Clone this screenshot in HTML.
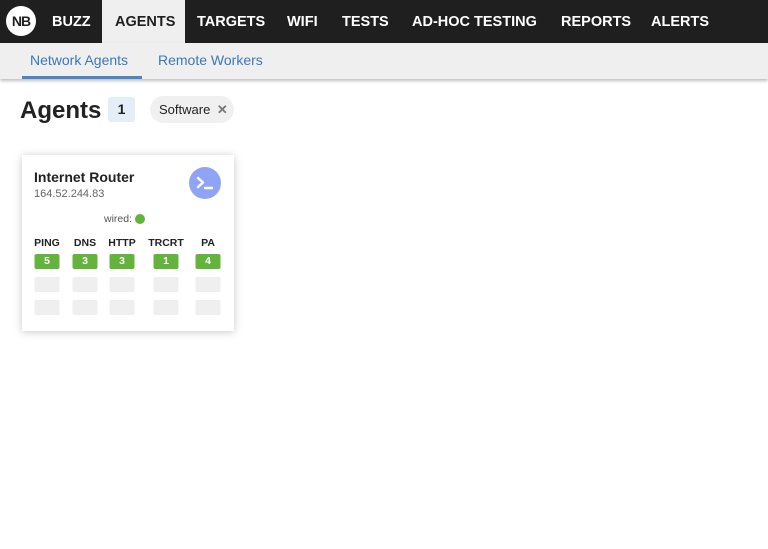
<!DOCTYPE html><html><head><style>
*{margin:0;padding:0;box-sizing:border-box}
body{width:768px;height:549px;background:#fff;font-family:"Liberation Sans",sans-serif;position:relative;overflow:hidden}
.nav{position:absolute;top:0;left:0;width:768px;height:43px;background:#1f1f1f}
.nav span{position:absolute;top:1px;height:43px;line-height:43px;color:#fff;font-weight:bold;font-size:14.5px}
.logo{position:absolute;left:6px;top:6px;width:30px;height:30px;border-radius:50%;background:#fff;color:#1f1f1f;font-weight:bold;font-size:14px;text-align:center;line-height:30px;letter-spacing:-1px}
.sub{position:absolute;top:43px;left:0;width:768px;height:36px;background:#efefef;box-shadow:0 2px 3px rgba(0,0,0,.25)}
.sub span{position:absolute;top:9px;font-size:14px;color:#3b78b7}
.card{position:absolute;left:22px;top:155px;width:212px;height:176px;background:#fff;box-shadow:0 1px 8px rgba(0,0,0,.22)}
.c{position:absolute;transform:translateX(-50%);text-align:center}
.lab{top:82px;font-size:10.5px;font-weight:bold;color:#222}
.b{top:99px;width:25px;height:15px;background:#64b33c;color:#fff;font-weight:bold;font-size:10.5px;line-height:15px;border-radius:2px}
.g{width:25px;height:15px;background:#efefef;border-radius:2px}
</style></head><body>
<div class="nav">
<div class="logo">NB</div>
<div style="position:absolute;left:102px;top:0;width:83px;height:43px;background:#efefef"></div>
<span style="left:52px">BUZZ</span>
<span style="left:115px;color:#1f1f1f">AGENTS</span>
<span style="left:197px">TARGETS</span>
<span style="left:287px">WIFI</span>
<span style="left:342px">TESTS</span>
<span style="left:412px">AD-HOC TESTING</span>
<span style="left:561px">REPORTS</span>
<span style="left:651px">ALERTS</span>
</div>
<div class="sub">
<span style="left:30px">Network Agents</span>
<span style="left:158px">Remote Workers</span>
<div style="position:absolute;left:22px;top:33px;width:120px;height:3px;background:#4a86c8"></div>
</div>
<div style="position:absolute;left:20px;top:97px;font-size:24px;font-weight:bold;color:#222">Agents</div>
<div style="position:absolute;left:108px;top:97px;width:27px;height:25px;background:#e3eef8;border-radius:3px;text-align:center;line-height:25px;font-weight:bold;font-size:14px;color:#222">1</div>
<div style="position:absolute;left:150px;top:96px;width:84px;height:27px;background:#f0f0f0;border-radius:14px;font-size:13px;line-height:27px;padding-left:9px;color:#222">Software <span style="color:#777;font-weight:bold;margin-left:3px">✕</span></div>
<div class="card">
<div style="position:absolute;left:12px;top:14px;font-size:14px;font-weight:bold;color:#222">Internet Router</div>
<div style="position:absolute;left:12px;top:33px;font-size:11px;color:#666">164.52.244.83</div>
<div style="position:absolute;left:167px;top:12px;width:32px;height:32px;border-radius:50%;background:#8fa4f5">
<svg width="32" height="32" viewBox="0 0 32 32"><path d="M9 11l5 4.5-5 4.5" stroke="#fff" stroke-width="2.4" fill="none" stroke-linecap="round" stroke-linejoin="round"/><path d="M16 21h7" stroke="#fff" stroke-width="2.4" stroke-linecap="round"/></svg></div>
<div style="position:absolute;left:82px;top:58px;font-size:10.5px;color:#555">wired:</div>
<div style="position:absolute;left:113px;top:59px;width:10px;height:10px;border-radius:50%;background:#64b33c"></div>
<div class="c lab" style="left:25px">PING</div><div class="c lab" style="left:63px">DNS</div><div class="c lab" style="left:100px">HTTP</div><div class="c lab" style="left:144px">TRCRT</div><div class="c lab" style="left:186px">PA</div>
<div class="c b" style="left:25px">5</div><div class="c b" style="left:63px">3</div><div class="c b" style="left:100px">3</div><div class="c b" style="left:144px">1</div><div class="c b" style="left:186px">4</div>
<div class="c g" style="left:25px;top:122px"></div><div class="c g" style="left:63px;top:122px"></div><div class="c g" style="left:100px;top:122px"></div><div class="c g" style="left:144px;top:122px"></div><div class="c g" style="left:186px;top:122px"></div>
<div class="c g" style="left:25px;top:145px"></div><div class="c g" style="left:63px;top:145px"></div><div class="c g" style="left:100px;top:145px"></div><div class="c g" style="left:144px;top:145px"></div><div class="c g" style="left:186px;top:145px"></div>
</div>
</body></html>
